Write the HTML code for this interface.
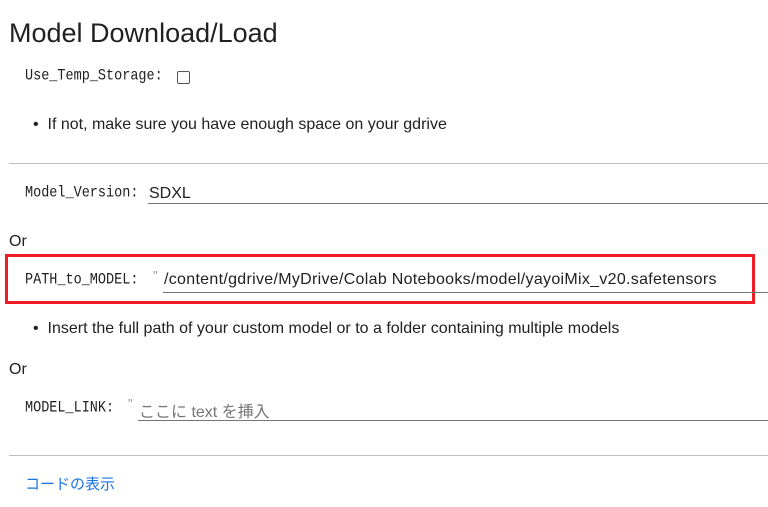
<!DOCTYPE html>
<html><head><meta charset="utf-8"><style>
body{margin:0;width:768px;height:507px;background:#fff;position:relative;overflow:hidden;font-family:"Liberation Sans","Noto Sans CJK JP",sans-serif;color:#212121}
.a{position:absolute;white-space:nowrap}
.mono{font-family:"Liberation Mono","Noto Sans CJK JP",monospace;font-size:13.5px;color:#212121;transform:scaleY(1.15);transform-origin:left top}
.t{font-size:16px}
.hr{position:absolute;left:9px;right:0;height:1px;background:#bdbdbd}
.ul{position:absolute;height:1px;background:#757575}
</style></head><body>
<div class="a" style="left:9px;top:18px;font-size:27px">Model Download/Load</div>
<div class="a mono" style="left:25px;top:68px">Use_Temp_Storage:</div>
<div class="a" style="left:177px;top:71px;width:11px;height:11px;border:1px solid #555;border-radius:2px"></div>
<div class="a t" style="left:33px;top:116px">•&nbsp;&nbsp;If not, make sure you have enough space on your gdrive</div>
<div class="hr" style="top:163px"></div>
<div class="a mono" style="left:25px;top:185px">Model_Version:</div>
<div class="a t" style="left:149px;top:185px">SDXL</div>
<div class="ul" style="left:148px;right:0;top:203px"></div>
<div class="a t" style="left:9px;top:233px">Or</div>
<div class="a" style="left:5px;top:254px;width:744px;height:44px;border:3px solid #ee1c25"></div>
<div class="a mono" style="left:25px;top:272px">PATH_to_MODEL:</div>
<div class="a" style="left:153px;top:268px;color:#999;font-size:13px">"</div>
<div class="a t" style="left:164px;top:271px;letter-spacing:0.3px">/content/gdrive/MyDrive/Colab Notebooks/model/yayoiMix_v20.safetensors</div>
<div class="ul" style="left:163px;right:0;top:292px"></div>
<div class="a t" style="left:33px;top:320px">•&nbsp;&nbsp;Insert the full path of your custom model or to a folder containing multiple models</div>
<div class="a t" style="left:9px;top:361px">Or</div>
<div class="a mono" style="left:25px;top:400px">MODEL_LINK:</div>
<div class="a" style="left:128px;top:396px;color:#999;font-size:13px">"</div>
<div class="a t" style="left:139px;top:398px;color:#757575">ここに text を挿入</div>
<div class="ul" style="left:138px;right:0;top:420px"></div>
<div class="hr" style="top:455px"></div>
<div class="a" style="left:25px;top:473px;font-size:15px;color:#1a73e8">コードの表示</div>
</body></html>
